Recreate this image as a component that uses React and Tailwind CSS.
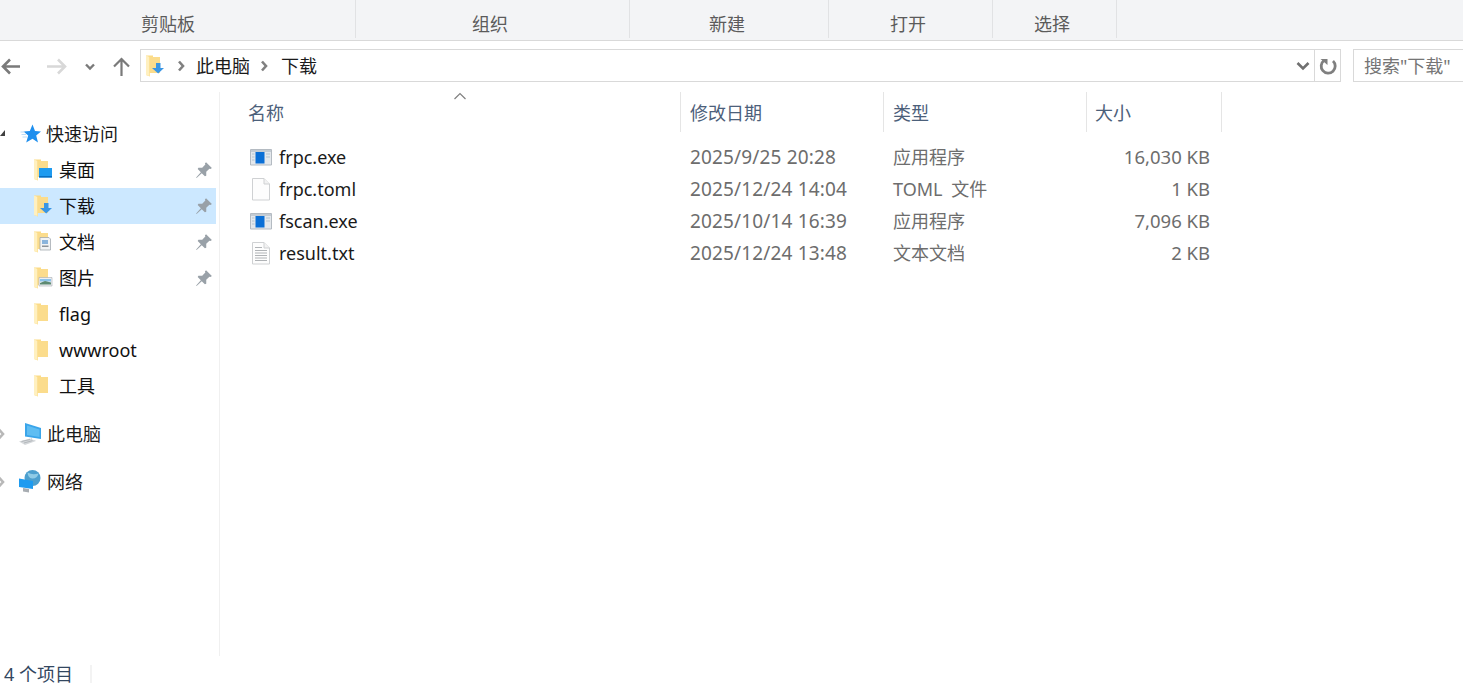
import React from 'react';

const FONT = "font-['Noto_Sans','Noto_Sans_CJK_SC',sans-serif]";

// folder seen from the front, with an optional badge drawn over its lower right
const FolderIcon = ({ badge }) => (
  <svg width="24" height="24" viewBox="0 0 24 24" className="shrink-0">
    <path d="M2 1.5 L9 1.5 L9 3 L16 3 L16 19 L6 19 L6 22.5 L2 21 Z" fill="#fcdb85" />
    <path d="M2 1.5 L5.5 3 L5.5 22 L2 21 Z" fill="#fff0c0" />
    <path d="M5.5 3 L16 3 L16 19 L5.5 19 Z" fill="#fbdc8c" />
    {badge === 'desktop' && <path d="M7 10 H20 V19.5 H7 Z" fill="#1e9bf0" />}
    {badge === 'desktop' && <path d="M7 18 H20 V19.5 H7 Z" fill="#0a6fc0" />}
    {badge === 'download' && <path d="M12 9 H16.5 V14 H20 L14.2 19.5 L8 14 H12 Z" fill="#3a96e4" />}
    {badge === 'doc' && <path d="M8 7.5 H17 L18.5 9 V20 H8 Z" fill="#f1f3f5" stroke="#9aa0a6" strokeWidth="0.7" />}
    {badge === 'doc' && <path d="M10 10 H16 V14 H10 Z" fill="#8ab4dc" />}
    {badge === 'doc' && <path d="M10 15.5 H16.5 V17 H10 Z" fill="#8d9399" />}
    {badge === 'pic' && <path d="M7 11.5 H20 V20 H7 Z" fill="#eef0f2" stroke="#a7acb1" strokeWidth="0.6" />}
    {badge === 'pic' && <path d="M8 13 H19 V15.5 H8 Z" fill="#8cc3ea" />}
    {badge === 'pic' && <path d="M8 17 L13 15 L19 16.5 V18.5 H8 Z" fill="#5d8a72" />}
  </svg>
);

const PinIcon = () => (
  <svg width="18" height="18" viewBox="0 0 16 16" className="shrink-0">
    <path d="M9.8 1 L15 6.2 L13.8 7.2 L12.8 6.8 L10 9.6 L10 13 L8.8 13.6 L6 10.8 L1.4 15 L1 14.6 L5.2 10 L2.4 7.2 L3 6 L6.4 6 L9.2 3.2 L8.8 2.2 Z" fill="#99a1a8" />
  </svg>
);

const StarIcon = () => (
  <svg width="22" height="22" viewBox="0 0 22 22" className="shrink-0">
    <path d="M12.5 1.5 L15 8 L21 8.4 L16.2 12.6 L18 19.5 L12.5 15.8 L6.2 19.5 L8.2 12.6 L3.5 8.4 L9.8 8 Z" fill="#1f8fee" />
    <path d="M0.5 9 H5 M1.5 11.5 H6 M2.5 14 H7" stroke="#bcdcf7" strokeWidth="1" />
  </svg>
);

const ComputerIcon = () => (
  <svg width="24" height="24" viewBox="0 0 24 24" className="shrink-0">
    <path d="M7 1 L23 6 V17 L7 14.5 Z" fill="#3aa5ea" />
    <path d="M9 3.5 L21.5 7.5 V15 L9 13 Z" fill="#5fbdf2" />
    <path d="M13 15 L14 18 L18 19 L13 19 Z" fill="#b5babf" />
    <path d="M1 19.5 L12 16.5 L18 19 L7 23 Z" fill="#d5d8db" />
    <path d="M3.5 19.5 L12 17.5 M6 21 L14.5 18.6" stroke="#a9aeb3" strokeWidth="0.8" />
  </svg>
);

const NetworkIcon = () => (
  <svg width="24" height="24" viewBox="0 0 24 24" className="shrink-0">
    <circle cx="14.5" cy="8" r="8" fill="#4c9fce" />
    <path d="M9.5 2.5 Q14.5 5.5 20.5 3.5 Q19 9 14 8.5 Q10 8 9.5 2.5 Z" fill="#8fcbe6" />
    <path d="M1 8.5 L15 11 V19 L1 17 Z" fill="#1e9bf0" />
    <path d="M5 18 L11 19 V22.5 L5 21.5 Z" fill="#a8adb2" />
  </svg>
);

const ExeIcon = () => (
  <svg width="24" height="24" viewBox="0 0 24 24" className="shrink-0">
    <path d="M1.5 4.5 H22.5 V20 H1.5 Z" fill="#e4e8ec" stroke="#b4bbc2" strokeWidth="1" />
    <path d="M2 5 H22 V7 H2 Z" fill="#c3cbd3" />
    <path d="M6.5 7 H15.5 V18.5 H6.5 Z" fill="#0a6fd6" />
    <path d="M3 9 H5.5 M3 12 H5.5 M3 15 H5.5 M17 9 H21 M17 12 H21" stroke="#b4c3d0" strokeWidth="1.2" />
  </svg>
);

const BlankFileIcon = ({ lines }) => (
  <svg width="24" height="24" viewBox="0 0 24 24" className="shrink-0">
    <path d="M3.5 1.5 H15 L20.5 7 V23 H3.5 Z" fill="#fdfdfd" stroke="#cfd1d3" strokeWidth="1" />
    <path d="M15 1.5 V7 H20.5" fill="#f2f2f2" stroke="#cfd1d3" strokeWidth="1" />
    {lines && (
      <path
        d="M6 6.5 H13 M6 9.5 H18 M6 12 H18 M6 14.5 H18 M6 17 H18 M6 19.5 H18"
        stroke="#b0b3b6"
        strokeWidth="1"
      />
    )}
  </svg>
);

const Chevron = ({ className, color = '#808080', w = 2.6 }) => (
  <svg width="10" height="12" viewBox="0 0 10 12" className={className}>
    <path d="M3 1.5 L7 6 L3 10.5" fill="none" stroke={color} strokeWidth={w} />
  </svg>
);

const ribbonGroups = [
  { label: '剪贴板', width: 'w-[356px] pr-[19px]' },
  { label: '组织', width: 'w-[274px] pr-[5px]' },
  { label: '新建', width: 'w-[199px] pr-[4px]' },
  { label: '打开', width: 'w-[164px] pr-[5px]' },
  { label: '选择', width: 'w-[124px] pr-[5px]' },
];

const quickLinks = [
  { name: '桌面', badge: 'desktop', pinned: true },
  { name: '下载', badge: 'download', pinned: true, selected: true },
  { name: '文档', badge: 'doc', pinned: true },
  { name: '图片', badge: 'pic', pinned: true },
  { name: 'flag' },
  { name: 'wwwroot' },
  { name: '工具' },
];

const files = [
  { name: 'frpc.exe', date: '2025/9/25 20:28', type: '应用程序', size: '16,030 KB', icon: <ExeIcon /> },
  { name: 'frpc.toml', date: '2025/12/24 14:04', type: 'TOML 文件', size: '1 KB', icon: <BlankFileIcon /> },
  { name: 'fscan.exe', date: '2025/10/14 16:39', type: '应用程序', size: '7,096 KB', icon: <ExeIcon /> },
  { name: 'result.txt', date: '2025/12/24 13:48', type: '文本文档', size: '2 KB', icon: <BlankFileIcon lines /> },
];

const App = () => {
  return (
    <div className={`${FONT} h-[698px] w-[1463px] overflow-hidden bg-white text-[18px] leading-none flex flex-col`}>
      {/* Ribbon */}
      <div className="h-[41px] shrink-0 bg-[#f3f4f6] border-b border-[#d9d9d9] flex">
        {ribbonGroups.map((g) => (
          <div
            key={g.label}
            className={`${g.width} h-[38px] border-r border-[#e1e2e4] flex items-end justify-center pb-[5px] text-[#5b5b5b]`}
          >
            {g.label}
          </div>
        ))}
      </div>

      {/* Address row */}
      <div className="h-[41px] shrink-0 flex items-end">
        <div className="w-[140px] shrink-0 flex items-center pb-[4px]">
          <svg width="140" height="24" viewBox="0 0 140 24">
            <path d="M20 12.5 H3 M10 5.5 L3 12.5 L10 19.5" fill="none" stroke="#7a7a7a" strokeWidth="2.6" />
            <path d="M47 12.5 H65 M58 5.5 L65 12.5 L58 19.5" fill="none" stroke="#d8d8d8" strokeWidth="2.6" />
            <path d="M86 10.5 L90 14.5 L94 10.5" fill="none" stroke="#7a7a7a" strokeWidth="2.4" />
            <path d="M121.5 22 V5 M114 12.5 L121.5 5 L129 12.5" fill="none" stroke="#7a7a7a" strokeWidth="2.2" />
          </svg>
        </div>
        <div className="w-[1201px] h-[33px] shrink-0 border border-[#d9d9d9] flex items-center">
          <div className="flex-1 flex items-center pl-[3px]">
            <FolderIcon badge="download" />
            <Chevron className="ml-[8px]" />
            <span className="ml-[10px] text-[#1a1a1a]">此电脑</span>
            <Chevron className="ml-[9px]" />
            <span className="ml-[12px] text-[#1a1a1a]">下载</span>
          </div>
          <svg width="14" height="10" viewBox="0 0 14 10" className="mr-[4px]">
            <path d="M1.5 2 L7 7.5 L12.5 2" fill="none" stroke="#707070" strokeWidth="2.6" />
          </svg>
          <div className="w-[26px] h-full border-l border-[#d9d9d9] flex items-center justify-center">
            <svg width="20" height="20" viewBox="0 0 20 20">
              <path d="M6 4.5 A7 7 0 1 0 15 5" fill="none" stroke="#7f7f7f" strokeWidth="2.8" />
              <path d="M2.5 3 H9.5 V9 Z" fill="#7f7f7f" />
            </svg>
          </div>
        </div>
        <div className="ml-[12px] flex-1 h-[33px] border border-r-0 border-[#d9d9d9] flex items-center pl-[10px] text-[#757575]">
          搜索"下载"
        </div>
      </div>

      {/* Body */}
      <div className="h-[574px] shrink-0 flex pt-[10px]">
        {/* Sidebar */}
        <div className="w-[220px] shrink-0 border-r border-[#f0f0f0]">
          <div className="w-[216px] pt-[24px]">
            <div className="h-[36px] flex items-center relative">
              <svg width="8" height="8" viewBox="0 0 8 8" className="absolute left-0 top-[13px]">
                <path d="M0 7 L5 7 L5 1 Z" fill="#404040" />
              </svg>
              <div className="ml-[20px] flex items-center">
                <StarIcon />
                <span className="ml-[4px] text-[#1a1a1a]">快速访问</span>
              </div>
            </div>
            {quickLinks.map((item) => (
              <div
                key={item.name}
                className={`h-[36px] flex items-center pl-[32px] pr-[3px] ${item.selected ? 'bg-[#cce8ff]' : ''}`}
              >
                <FolderIcon badge={item.badge} />
                <span className="ml-[3px] flex-1 text-[#111111]">{item.name}</span>
                {item.pinned && <PinIcon />}
              </div>
            ))}
            <div className="h-[36px] mt-[12px] flex items-center pl-[18px] relative">
              <Chevron className="absolute left-[-4px] top-[12px]" color="#b8b8b8" />
              <ComputerIcon />
              <span className="ml-[5px] text-[#1a1a1a]">此电脑</span>
            </div>
            <div className="h-[36px] mt-[12px] flex items-center pl-[18px] relative">
              <Chevron className="absolute left-[-4px] top-[12px]" color="#b8b8b8" />
              <NetworkIcon />
              <span className="ml-[5px] text-[#1a1a1a]">网络</span>
            </div>
          </div>
        </div>

        {/* File list */}
        <div className="flex-1 relative">
          <svg width="14" height="8" viewBox="0 0 14 8" className="absolute left-[233px] top-0">
            <path d="M1.5 7 L7 1.5 L12.5 7" fill="none" stroke="#808080" strokeWidth="1.2" />
          </svg>
          <div className="h-[40px] flex text-[#4c607a]">
            <div className="w-[461px] border-r border-[#e5e5e5] pl-[28px] pt-[2px] flex items-center">名称</div>
            <div className="w-[203px] border-r border-[#e5e5e5] pl-[9px] pt-[2px] flex items-center">修改日期</div>
            <div className="w-[203px] border-r border-[#e5e5e5] pl-[9px] pt-[2px] flex items-center">类型</div>
            <div className="w-[135px] border-r border-[#e5e5e5] pl-[8px] pt-[2px] flex items-center">大小</div>
          </div>
          <div className="pt-[9px]">
            {files.map((f) => (
              <div key={f.name} className="h-[32px] flex items-center text-[#6d6d6d]">
                <div className="w-[461px] pl-[29px] flex items-center text-[#1a1a1a]">
                  {f.icon}
                  <span className="ml-[6px]">{f.name}</span>
                </div>
                <div className="w-[203px] pl-[9px] text-[19px] tracking-[0.15px]">{f.date}</div>
                <div className="w-[203px] pl-[9px] [word-spacing:4px]">{f.type}</div>
                <div className="w-[123px] text-right text-[18.5px]">{f.size}</div>
              </div>
            ))}
          </div>
        </div>
      </div>

      {/* Status bar */}
      <div className="flex-1 flex items-start pt-[9px] pl-[4px] text-[#33475f]">
        <span className="w-[86px]">4 个项目</span>
        <div className="w-[2px] h-[18px] bg-[#f3f3f3]" />
      </div>
    </div>
  );
};

export default App;
